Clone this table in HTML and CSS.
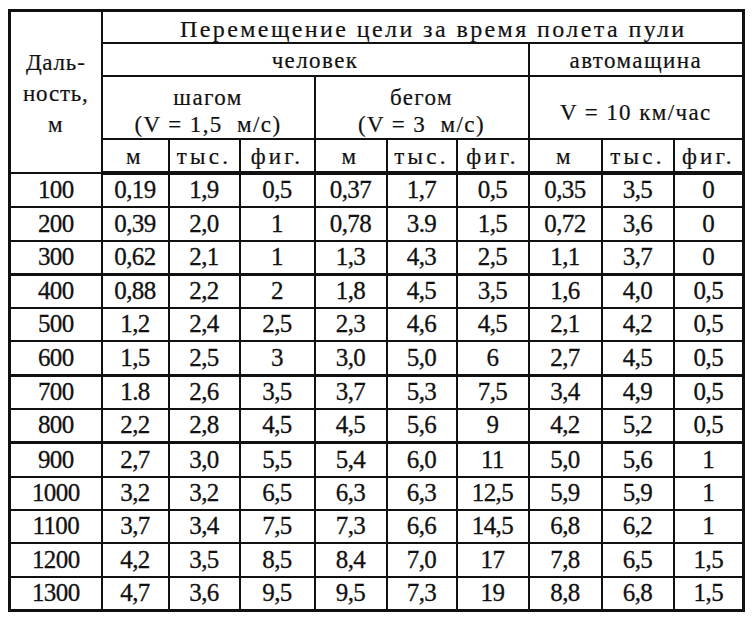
FILE: index.html
```html
<!DOCTYPE html>
<html lang="ru">
<head>
<meta charset="utf-8">
<link rel="stylesheet" href="styles.css">
</head>
<body>
<table class="tbl">
  <colgroup>
    <col class="c0"><col class="c1"><col class="c2"><col class="c3"><col class="c4"><col class="c5"><col class="c6"><col class="c7"><col class="c8"><col class="c9">
  </colgroup>
  <thead>
    <tr class="r-title">
      <th rowspan="4" class="dist">Даль-<br>ность,<br>м</th>
      <th colspan="9" class="title">Перемещение цели за время полета пули</th>
    </tr>
    <tr class="r-group">
      <th colspan="6">человек</th>
      <th colspan="3">автомащина</th>
    </tr>
    <tr class="r-speed">
      <th colspan="3">шагом<br>(V = 1,5&nbsp; м/с)</th>
      <th colspan="3">бегом<br>(V = 3&nbsp; м/с)</th>
      <th colspan="3" class="kmh">V = 10 км/час</th>
    </tr>
    <tr class="r-units">
      <th>м</th><th>тыс.</th><th>фиг.</th>
      <th>м</th><th>тыс.</th><th>фиг.</th>
      <th>м</th><th>тыс.</th><th>фиг.</th>
    </tr>
  </thead>
  <tbody>
    <tr><td>100</td><td>0,19</td><td>1,9</td><td>0,5</td><td>0,37</td><td>1,7</td><td>0,5</td><td>0,35</td><td>3,5</td><td>0</td></tr>
    <tr><td>200</td><td>0,39</td><td>2,0</td><td>1</td><td>0,78</td><td>3.9</td><td>1,5</td><td>0,72</td><td>3,6</td><td>0</td></tr>
    <tr class="thick"><td>300</td><td>0,62</td><td>2,1</td><td>1</td><td>1,3</td><td>4,3</td><td>2,5</td><td>1,1</td><td>3,7</td><td>0</td></tr>
    <tr><td>400</td><td>0,88</td><td>2,2</td><td>2</td><td>1,8</td><td>4,5</td><td>3,5</td><td>1,6</td><td>4,0</td><td>0,5</td></tr>
    <tr><td>500</td><td>1,2</td><td>2,4</td><td>2,5</td><td>2,3</td><td>4,6</td><td>4,5</td><td>2,1</td><td>4,2</td><td>0,5</td></tr>
    <tr class="thick"><td>600</td><td>1,5</td><td>2,5</td><td>3</td><td>3,0</td><td>5,0</td><td>6</td><td>2,7</td><td>4,5</td><td>0,5</td></tr>
    <tr><td>700</td><td>1.8</td><td>2,6</td><td>3,5</td><td>3,7</td><td>5,3</td><td>7,5</td><td>3,4</td><td>4,9</td><td>0,5</td></tr>
    <tr class="thick"><td>800</td><td>2,2</td><td>2,8</td><td>4,5</td><td>4,5</td><td>5,6</td><td>9</td><td>4,2</td><td>5,2</td><td>0,5</td></tr>
    <tr><td>900</td><td>2,7</td><td>3,0</td><td>5,5</td><td>5,4</td><td>6,0</td><td>11</td><td>5,0</td><td>5,6</td><td>1</td></tr>
    <tr><td>1000</td><td>3,2</td><td>3,2</td><td>6,5</td><td>6,3</td><td>6,3</td><td>12,5</td><td>5,9</td><td>5,9</td><td>1</td></tr>
    <tr><td>1100</td><td>3,7</td><td>3,4</td><td>7,5</td><td>7,3</td><td>6,6</td><td>14,5</td><td>6,8</td><td>6,2</td><td>1</td></tr>
    <tr><td>1200</td><td>4,2</td><td>3,5</td><td>8,5</td><td>8,4</td><td>7,0</td><td>17</td><td>7,8</td><td>6,5</td><td>1,5</td></tr>
    <tr><td>1300</td><td>4,7</td><td>3,6</td><td>9,5</td><td>9,5</td><td>7,3</td><td>19</td><td>8,8</td><td>6,8</td><td>1,5</td></tr>
  </tbody>
</table>
</body>
</html>
```

FILE: styles.css
```css
html, body {
  background: #ffffff;
}
body {
  margin: 9px 0 0 8px;
  font-family: "Liberation Serif", "Times New Roman", serif;
  color: #111;
}
.tbl {
  border-collapse: collapse;
  table-layout: fixed;
  width: 734px;
  border: 3px solid #111;
}
.c0 { width: 92px; }
.c1 { width: 67px; }
.c2 { width: 71px; }
.c3 { width: 75px; }
.c4 { width: 72px; }
.c5 { width: 70px; }
.c6 { width: 72px; }
.c7 { width: 73px; }
.c8 { width: 72px; }
.c9 { width: 70px; }
.tbl th, .tbl td {
  border: 2px solid #111;
  padding: 0;
  text-align: center;
  font-weight: normal;
  line-height: 1.15;
}
.tbl th {
  font-size: 23px;
  letter-spacing: 1.4px;
  -webkit-text-stroke: 0.2px #111;
}
.tbl td {
  font-size: 25px;
  letter-spacing: -0.6px;
  height: 31.3px;
  -webkit-text-stroke: 0.3px #111;
}
.tbl th.dist {
  line-height: 31px;
  letter-spacing: 0.8px;
  padding-top: 2px;
}
.tbl th.title {
  font-size: 24px;
  letter-spacing: 2.4px;
  line-height: 26px;
  height: 27px;
  padding: 3px 0 0 22px;
}
.tbl .r-group th {
  height: 29px;
  line-height: 26px;
  padding-top: 2px;
}
.tbl .r-speed th {
  height: 61px;
  line-height: 27px;
  vertical-align: bottom;
}
.tbl .r-speed th.kmh {
  height: auto;
  vertical-align: middle;
  padding-top: 10px;
}
.tbl .r-units th {
  height: 29px;
  line-height: 26px;
  border-bottom: 4px solid #111;
  font-size: 23px;
  letter-spacing: 3.2px;
  padding-top: 2px;
}
.tbl tr.thick td { border-bottom-width: 3px; }
```
